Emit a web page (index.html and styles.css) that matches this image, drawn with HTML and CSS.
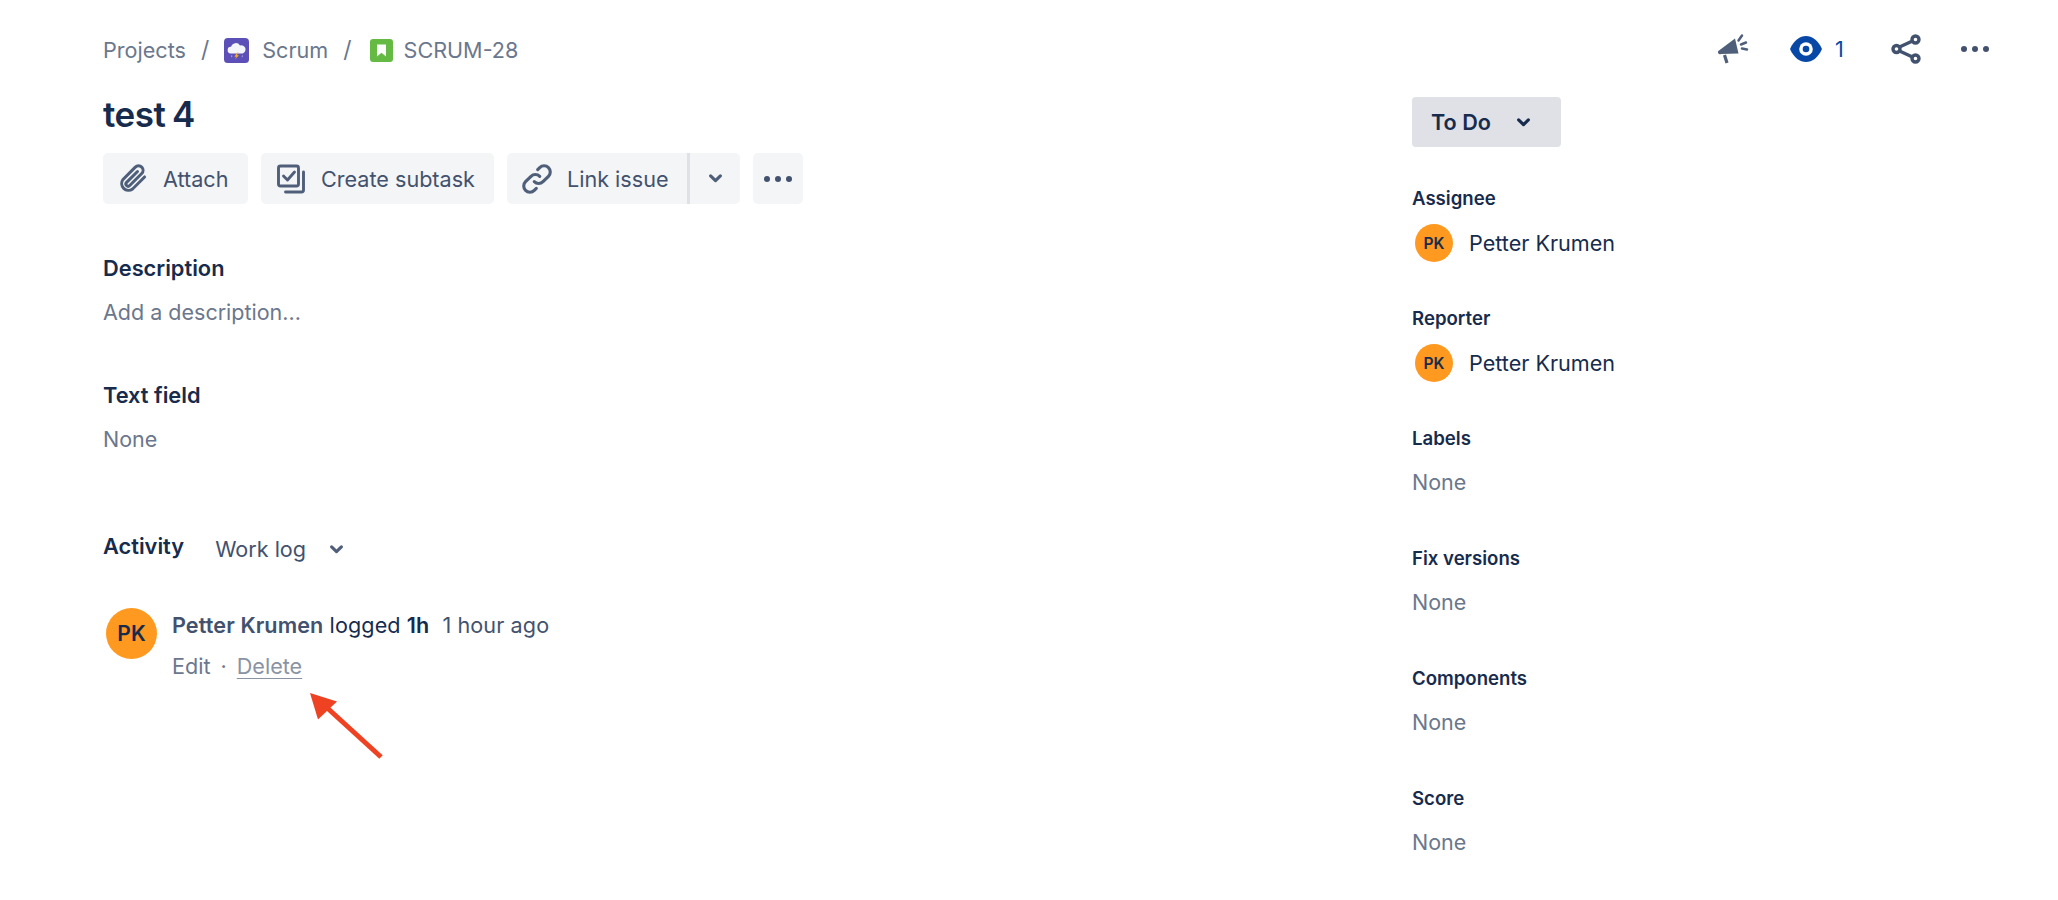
FILE: index.html
```html
<!DOCTYPE html>
<html lang="en">
<head>
<meta charset="utf-8">
<title>SCRUM-28</title>
<link rel="stylesheet" href="styles.css">
</head>
<body>
<div class="page">
  <main class="main">
    <nav class="crumbs">
      <span>Projects</span><span class="sep">/</span>
      <svg class="crumb-icon" viewBox="0 0 26 26"><rect width="26" height="26" rx="4" fill="#5c50b8"/><path d="M7 16a3.4 3.4 0 0 1 .4-6.8A5 5 0 0 1 16.600 7.800 4.300 4.300 0 0 1 19.500 16z" fill="#f4f5fb"/><path d="M13.800 15l-3 4.500h2.200l-1.800 3.200 4.300-4.700h-2.200l1.800-3z" fill="#f5b51f"/><path d="M8 18v2M19 18v2" stroke="#a9a3e0" stroke-width="1"/></svg>
      <span>Scrum</span><span class="sep sep-b">/</span>
      <svg class="crumb-icon story" viewBox="0 0 23 23"><rect width="23" height="23" rx="3" fill="#65ba43"/><path d="M7 5.500h9v12l-4.500-3.800L7 17.500z" fill="#fff"/></svg>
      <span>SCRUM-28</span>
    </nav>
    <h1 class="title">test 4</h1>
    <div class="actions">
      <button class="btn btn-attach">
        <svg class="btn-icon" viewBox="1 1 22 22" fill="none" stroke="#505f79" stroke-width="2.200" stroke-linecap="round"><path d="M20.500 10.500l-8.800 8.800a5 5 0 0 1-7-7l9-9a3.300 3.300 0 0 1 4.700 4.700l-8.800 8.800a1.600 1.600 0 0 1-2.300-2.300l8-8"/></svg>
        Attach
      </button>
      <button class="btn btn-subtask">
        <svg class="btn-icon" viewBox="0 0 30 30" fill="none" stroke="#505f79" stroke-width="2.900" stroke-linecap="round" stroke-linejoin="round"><rect x="2.500" y="2" width="20" height="20" rx="2"/><path d="M7.500 12l4 4 7-8"/><path d="M27.500 8v18a2 2 0 0 1-2 2H9.500"/></svg>
        Create subtask
      </button>
      <div class="split">
        <button class="btn btn-main">
          <svg class="btn-icon" viewBox="1 1 22 22" fill="none" stroke="#505f79" stroke-width="2.300" stroke-linecap="round"><path d="M10 14a4.500 4.500 0 0 0 6.400 0l4-4a4.500 4.500 0 0 0-6.400-6.400l-1.500 1.500"/><path d="M14 10a4.500 4.500 0 0 0-6.400 0l-4 4a4.500 4.500 0 0 0 6.400 6.400l1.500-1.500"/></svg>
          Link issue
        </button>
        <button class="btn btn-chev">
          <svg class="chev" viewBox="0 0 12 8" fill="none" stroke="#505f79" stroke-width="2.900" stroke-linecap="round" stroke-linejoin="round"><path d="M1.500 1.500L6 6l4.500-4.500"/></svg>
        </button>
      </div>
      <button class="btn btn-more"><span class="dots"><i></i><i></i><i></i></span></button>
    </div>

    <section class="field first">
      <h2 class="field-title">Description</h2>
      <p class="muted">Add a description...</p>
    </section>
    <section class="field second">
      <h2 class="field-title">Text field</h2>
      <p class="muted">None</p>
    </section>

    <div class="activity-head">
      <h2 class="field-title">Activity</h2>
      <div class="filter">Work log
        <svg class="chev" viewBox="0 0 12 8" fill="none" stroke="#505f79" stroke-width="2.900" stroke-linecap="round" stroke-linejoin="round"><path d="M1.500 1.500L6 6l4.500-4.500"/></svg>
      </div>
    </div>

    <div class="entry">
      <div class="avatar avatar-lg">PK</div>
      <div class="entry-body">
        <div class="entry-line"><strong class="author">Petter Krumen</strong> logged <strong class="amount">1h</strong><span class="when">1 hour ago</span></div>
        <div class="entry-links"><span>Edit</span><span class="dot">·</span><span class="delete">Delete</span></div>
      </div>
      <svg class="arrow" viewBox="0 0 80 70" width="80" height="70"><path d="M71 65L14 13" stroke="#ee4223" stroke-width="5" fill="none"/><path d="M0 1l27 8.500-19 18z" fill="#ee4223"/></svg>
    </div>
  </main>

  <aside class="side">
    <div class="top-icons">
      <svg class="ti-mega" viewBox="0 0 32 32"><path d="M1 17.500L17 5.500l3.500 15L3 21a2 2 0 0 1-2-3.500z" fill="#505f79"/><path d="M6.500 22l2.500 8" stroke="#505f79" stroke-width="3.200"/><path d="M20.500 7.500l3.500-5M23 11.500l5-2M24 15.500l5 1" stroke="#505f79" stroke-width="2.500" stroke-linecap="round"/></svg>
      <div class="watch">
        <svg class="ti-eye" viewBox="0 0 32 26"><path d="M0 13C4 4 10 0 16 0s12 4 16 13c-4 9-10 13-16 13S4 22 0 13z" fill="#0747a6"/><circle cx="16" cy="13" r="6.800" fill="#fff"/><circle cx="16" cy="13" r="3.300" fill="#0747a6"/></svg>
        <span>1</span>
      </div>
      <svg class="ti-share" viewBox="0 0 30 30" fill="none" stroke="#42526e" stroke-width="3.400"><circle cx="24.500" cy="5.500" r="3.500"/><circle cx="24.500" cy="24.500" r="3.500"/><circle cx="5.500" cy="15" r="3.500"/><path d="M8.500 13l13-6M8.500 17l13 6"/></svg>
      <span class="dots dots-top"><i></i><i></i><i></i></span>
    </div>

    <button class="status">To Do
      <svg class="chev" viewBox="0 0 12 8" fill="none" stroke="#172b4d" stroke-width="2.900" stroke-linecap="round" stroke-linejoin="round"><path d="M1.500 1.500L6 6l4.500-4.500"/></svg>
    </button>

    <div class="prop">
      <h3 class="prop-label">Assignee</h3>
      <div class="person"><span class="avatar avatar-sm">PK</span>Petter Krumen</div>
    </div>
    <div class="prop">
      <h3 class="prop-label">Reporter</h3>
      <div class="person"><span class="avatar avatar-sm">PK</span>Petter Krumen</div>
    </div>
    <div class="prop">
      <h3 class="prop-label">Labels</h3>
      <p class="muted side-none">None</p>
    </div>
    <div class="prop">
      <h3 class="prop-label">Fix versions</h3>
      <p class="muted side-none">None</p>
    </div>
    <div class="prop">
      <h3 class="prop-label">Components</h3>
      <p class="muted side-none">None</p>
    </div>
    <div class="prop">
      <h3 class="prop-label">Score</h3>
      <p class="muted side-none">None</p>
    </div>
  </aside>
</div>
</body>
</html>
```
FILE: styles.css
```css
* { box-sizing: border-box; }
html, body { margin: 0; padding: 0; background: #fff; }
body {
  font-family: Inter, "Liberation Sans", sans-serif;
  color: #172b4d;
  font-size: 21.6px;
  height: 900px;
  overflow: hidden;
}
h1, h2, h3, p { margin: 0; font: inherit; }
.page { display: flex; padding: 0 38px 0 103px; }
.main { width: 1309px; flex: none; }
.side { flex: 1; position: relative; }

.crumbs { display: flex; align-items: center; height: 26px; margin-top: 37px; color: #6b778c; font-size: 21.6px; line-height: 26px; }
.sep { margin: 0 15px 0 15px; font-size: 23px; }
.sep-b { margin: 0 18px 0 15px; }
.crumb-icon { width: 25px; height: 25px; margin-right: 13px; flex: none; }
.story { width: 23px; height: 23px; margin-right: 11px; }

.title { font-size: 35px; line-height: 42px; font-weight: 600; margin-top: 30px; letter-spacing: -0.5px; word-spacing: -1.5px; }

.actions { display: flex; gap: 13px; margin-top: 18px; }
.btn {
  display: flex; align-items: center;
  height: 51px; border: 0; border-radius: 5px; background: #f4f5f7;
  color: #42526e; font: 400 21.6px Inter, "Liberation Sans", sans-serif; padding: 0 0 0 15px;
}
.btn-attach { width: 145px; }
.btn-subtask { width: 233px; }
.btn-icon { width: 30px; height: 30px; margin-right: 15px; flex: none; }
.split { display: flex; }
.btn-main { border-radius: 5px 0 0 5px; border-right: 3px solid #dfe1e6; width: 183px; }
.btn-chev { width: 50px; padding: 0; border-radius: 0 5px 5px 0; justify-content: center; }
.btn-more { width: 50px; padding: 0; justify-content: center; }
.chev { width: 13px; height: 9px; flex: none; }
.dots { display: inline-flex; gap: 5px; }
.dots i { width: 6px; height: 6px; border-radius: 50%; background: #42526e; display: block; }

.field-title { font-size: 21.8px; line-height: 26px; font-weight: 600; }
.muted { color: #6b778c; font-size: 21.5px; line-height: 26px; }
.field.first { margin-top: 51px; }
.field.first .muted { margin-top: 18px; }
.field.second { margin-top: 57px; }
.field.second .muted { margin-top: 18px; }

.activity-head { display: flex; align-items: flex-start; margin-top: 81px; }
.filter { display: flex; align-items: center; margin: 3px 0 0 31px; color: #42526e; line-height: 26px; }
.filter .chev { margin-left: 24px; }

.entry { display: flex; margin-top: 46px; padding-left: 3px; position: relative; }
.avatar {
  background: #ff991f; color: #172b4d; border-radius: 50%;
  display: flex; align-items: center; justify-content: center; flex: none;
}
.avatar-lg { width: 51px; height: 51px; font-size: 21px; font-weight: 600; }
.avatar-sm { width: 38px; height: 38px; font-size: 15.500px; font-weight: 600; margin: 0 16px 0 3px; }
.entry-body { margin-left: 15px; }
.entry-line { line-height: 26px; margin-top: 4px; color: #172b4d; letter-spacing: 0.1px; }
.author { font-weight: 600; color: #42526e; }
.amount { font-weight: 600; }
.when { margin-left: 13px; color: #42526e; }
.entry-links { display: flex; color: #6b778c; line-height: 26px; margin-top: 15px; }
.dot { margin: 0 10px; }
.delete { color: #8993a4; text-decoration: underline; text-underline-offset: 4px; text-decoration-thickness: 1px; }
.arrow { position: absolute; left: 207px; top: 84px; }

.top-icons { position: absolute; right: 0; top: 30px; left: 0; height: 38px; display: flex; align-items: center; padding-left: 306px; }
.ti-mega { width: 32px; height: 32px; flex: none; }
.watch { display: flex; align-items: center; margin-left: 40px; color: #0747a6; gap: 13px; }
.ti-eye { width: 32px; height: 26px; }
.ti-share { width: 30px; height: 30px; margin-left: 47px; flex: none; }
.dots-top { margin-left: 40px; }

.status {
  display: flex; align-items: center; width: 149px; height: 50px; margin-top: 97px;
  background: #dfe1e6; border: 0; border-radius: 4px; padding: 0 0 0 19px;
  color: #172b4d; font: 600 21.6px Inter, "Liberation Sans", sans-serif;
}
.status .chev { margin-left: 26px; }

.prop { height: 120px; }
.status + .prop { margin-top: 39px; }
.prop-label { font-size: 18.6px; font-weight: 600; line-height: 24px; }
.person { display: flex; align-items: center; margin-top: 14px; height: 38px; }
.side-none { margin-top: 19px; line-height: 26px; }
```
